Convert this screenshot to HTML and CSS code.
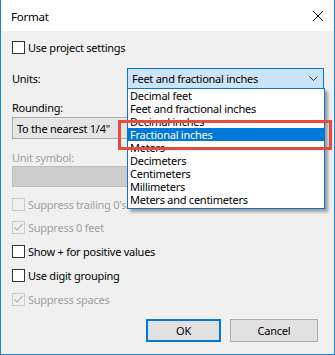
FILE: index.html
```html
<!DOCTYPE html>
<html lang="en">
<head>
    <meta charset="UTF-8">
    <meta name="viewport" content="width=device-width, initial-scale=1.0">
    <title>Format</title>
    <link rel="stylesheet" href="styles.css">
</head>
<body>
    <div class="window">
        <div class="titlebar">
            <span class="title">Format</span>
            <svg class="close" width="12" height="12" viewBox="0 0 12 12">
                <path d="M1 1 L11 11 M11 1 L1 11" stroke="#000" stroke-width="1" fill="none"/>
            </svg>
        </div>
        <div class="content">
            <label class="check first">
                <span class="box"></span>
                <span>Use project settings</span>
            </label>

            <div class="units-row">
                <span class="label">Units:</span>
                <div class="combo-wrap">
                    <div class="combo active">
                        <span>Feet and fractional inches</span>
                        <svg class="chevron" width="9" height="5" viewBox="0 0 9 5">
                            <path d="M0.5 0.5 L4.5 4.5 L8.5 0.5" stroke="#333" stroke-width="1" fill="none"/>
                        </svg>
                    </div>
                    <ul class="list">
                        <li>Decimal feet</li>
                        <li>Feet and fractional inches</li>
                        <li>Decimal inches</li>
                        <li class="selected">Fractional inches</li>
                        <li>Meters</li>
                        <li>Decimeters</li>
                        <li>Centimeters</li>
                        <li>Millimeters</li>
                        <li>Meters and centimeters</li>
                    </ul>
                </div>
            </div>

            <div class="label field-label">Rounding:</div>
            <div class="combo plain">To the nearest 1/4"</div>

            <div class="label field-label disabled">Unit symbol:</div>
            <div class="combo off"></div>

            <div class="checks">
                <label class="check disabled">
                    <span class="box"></span>
                    <span>Suppress trailing 0's</span>
                </label>
                <label class="check disabled">
                    <span class="box checked">
                        <svg width="11" height="11" viewBox="0 0 11 11"><path d="M1.5 5.5 L4 8 L9.5 2" stroke="#bcbcbc" stroke-width="1.4" fill="none"/></svg>
                    </span>
                    <span>Suppress 0 feet</span>
                </label>
                <label class="check">
                    <span class="box"></span>
                    <span>Show + for positive values</span>
                </label>
                <label class="check">
                    <span class="box"></span>
                    <span>Use digit grouping</span>
                </label>
                <label class="check disabled">
                    <span class="box checked">
                        <svg width="11" height="11" viewBox="0 0 11 11"><path d="M1.5 5.5 L4 8 L9.5 2" stroke="#bcbcbc" stroke-width="1.4" fill="none"/></svg>
                    </span>
                    <span>Suppress spaces</span>
                </label>
            </div>

            <div class="buttons">
                <button class="default">OK</button>
                <button>Cancel</button>
            </div>
        </div>
        <div class="highlight"></div>
    </div>
</body>
</html>
```

FILE: styles.css
```css
body {
    margin: 0;
    font-family: "Noto Sans", sans-serif;
    font-size: 11px;
    letter-spacing: -0.25px;
    color: #000;
    background-color: #fff;
}
.window {
    position: relative;
    box-sizing: border-box;
    width: 335px;
    height: 355px;
    border: 1px solid #1883d7;
    border-top: none;
    background-color: #f0f0f0;
}
.titlebar {
    height: 31px;
    background-color: #fff;
    display: flex;
    align-items: center;
    justify-content: space-between;
    padding: 0 10px 0 10px;
}
.title {
    font-size: 11.5px;
    margin-top: 1px;
}
.close {
    margin-top: 1px;
}
.content {
    padding: 0 10px 0 11px;
}
.check {
    display: flex;
    align-items: center;
    height: 14px;
    gap: 3px;
}
.check.first {
    padding-top: 9px;
}
.box {
    box-sizing: border-box;
    width: 13px;
    height: 13px;
    border: 1px solid #333;
    background-color: #fff;
    display: flex;
    align-items: center;
    justify-content: center;
}
.check.disabled {
    color: #a0a0a0;
}
.check.disabled .box {
    border-color: #cccccc;
    background-color: #f0f0f0;
}
.units-row {
    display: flex;
    align-items: center;
    margin-top: 14px;
}
.units-row .label {
    width: 115px;
}
.combo-wrap {
    position: relative;
    flex: 1;
}
.combo {
    box-sizing: border-box;
    height: 21px;
    display: flex;
    align-items: center;
    justify-content: space-between;
    padding: 0 5px 0 4px;
}
.combo.active {
    background-color: #cce4f7;
    border: 1px solid #0078d7;
}
.combo.plain {
    height: 22px;
    width: 200px;
    background-color: #e5e5e5;
    border: 1px solid #adadad;
    margin-top: 2px;
}
.combo.off {
    width: 200px;
    background-color: #cccccc;
    border: 1px solid #bfbfbf;
    margin-top: 1px;
}
.list {
    position: absolute;
    top: 20px;
    left: 0;
    width: 196px;
    margin: 0;
    padding: 0 0 2px;
    list-style: none;
    background-color: #fff;
    border: 1px solid #0078d7;
    box-shadow: 3px 3px 3px rgba(0, 0, 0, 0.35);
    z-index: 2;
}
.list li {
    height: 13px;
    line-height: 13px;
    padding-left: 2px;
}
.list li.selected {
    background-color: #0078d7;
    color: #fff;
}
.field-label {
    margin-top: 12px;
    height: 14px;
    line-height: 14px;
}
.label.disabled {
    color: #a0a0a0;
}
.checks {
    margin-top: 10px;
    display: flex;
    flex-direction: column;
    gap: 9.75px;
}
.buttons {
    display: flex;
    justify-content: flex-end;
    gap: 9px;
    margin-top: 13px;
    padding-right: 6px;
}
button {
    font-family: inherit;
    font-size: 11px;
    letter-spacing: -0.2px;
    height: 23px;
    padding: 0;
    background-color: #e1e1e1;
    border: 1px solid #adadad;
    color: #000;
}
button.default {
    width: 75px;
    border: 2px solid #0078d7;
}
button:not(.default) {
    width: 88px;
}
.highlight {
    position: absolute;
    left: 117px;
    top: 120px;
    width: 208px;
    height: 24px;
    border: 3px solid #e84a3c;
    z-index: 3;
}
```
